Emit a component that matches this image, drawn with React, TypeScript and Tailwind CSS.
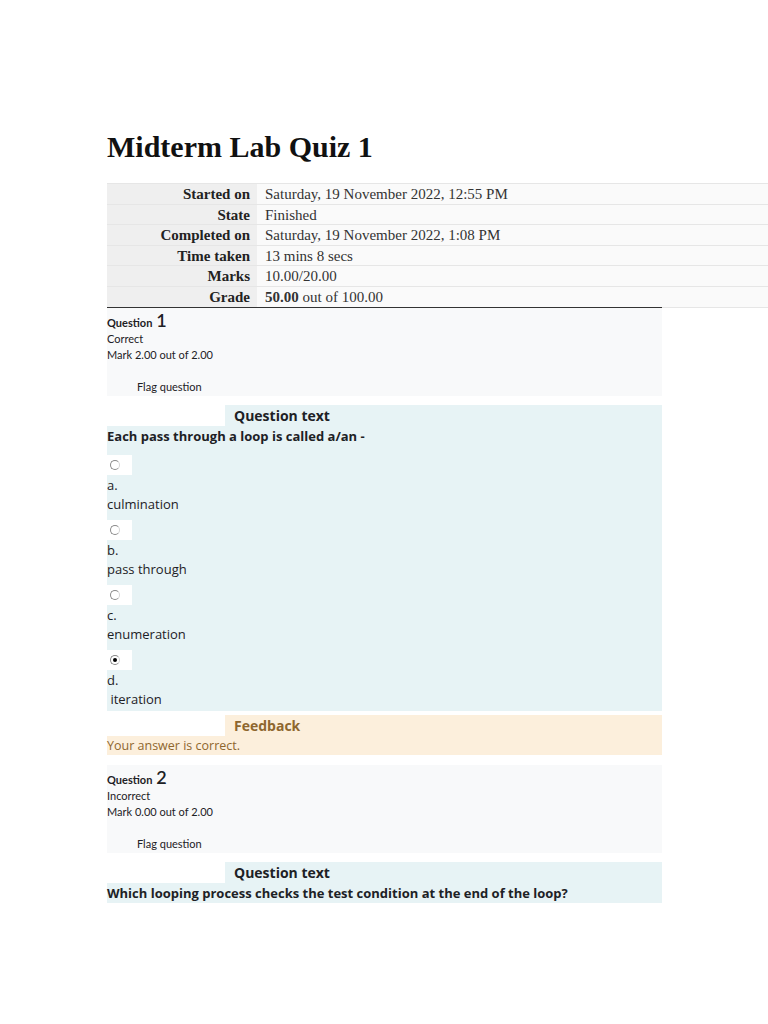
const serif = { fontFamily: '"Liberation Serif", "Times New Roman", serif' };
const lato = { fontFamily: 'Lato, "Noto Sans", sans-serif' };
const open = { fontFamily: '"Open Sans", "Noto Sans", sans-serif' };

const summary: [string, React.ReactNode][] = [
  ['Started on', 'Saturday, 19 November 2022, 12:55 PM'],
  ['State', 'Finished'],
  ['Completed on', 'Saturday, 19 November 2022, 1:08 PM'],
  ['Time taken', '13 mins 8 secs'],
  ['Marks', '10.00/20.00'],
  [
    'Grade',
    <>
      <b>50.00</b> out of 100.00
    </>,
  ],
];

function Radio({ checked = false }: { checked?: boolean }) {
  return (
    <div className="w-[25px] h-[20px] bg-white flex items-center pl-[3px]">
      <span className="w-[10px] h-[10px] rounded-full border border-[#8a8a8a] border-r-[#d5d5d5] flex items-center justify-center">
        {checked && <span className="w-[4px] h-[4px] rounded-full bg-black" />}
      </span>
    </div>
  );
}

function InfoBox({ num, state, mark }: { num: number; state: string; mark: string }) {
  return (
    <div className="w-[555px] bg-[#f8f9fa] pt-[4px] h-[88px] text-[11px] leading-[16px] text-[#1d2125]" style={lato}>
      <div className="flex items-baseline gap-[4px]">
        <span className="font-bold">Question</span>
        <span className="text-[18px] leading-[16px] font-semibold">{num}</span>
      </div>
      <div>{state}</div>
      <div>{mark}</div>
      <div className="pl-[30px] mt-[16px]">Flag question</div>
    </div>
  );
}

function Heading({ children, tone }: { children: React.ReactNode; tone: 'q' | 'f' }) {
  return (
    <div className="flex h-[21px] bg-white">
      <div
        className={`ml-[118px] flex-1 pl-[9px] text-[14px] leading-[21px] font-bold ${
          tone === 'q' ? 'bg-[#e7f3f5] text-[#1d2125]' : 'bg-[#fcefdc] text-[#8e662e]'
        }`}
      >
        {children}
      </div>
    </div>
  );
}

const options = [
  { l: 'a.', t: 'culmination' },
  { l: 'b.', t: 'pass through' },
  { l: 'c.', t: 'enumeration' },
  { l: 'd.', t: ' iteration', checked: true },
];

export default function App() {
  return (
    <div className="min-h-[1024px] bg-white overflow-hidden pl-[107px] pt-[129px]" style={open}>
      <h1 className="text-[30px] leading-[36px] font-bold text-[#111]" style={serif}>
        Midterm Lab Quiz 1
      </h1>

      <div className="mt-[18px] w-[680px] border-t border-[#e6e6e6]" style={serif}>
        {summary.map(([k, v]) => (
          <div key={k} className="flex h-[20.6px] border-b border-[#e6e6e6] text-[15px] leading-[20px]">
            <div className="w-[150px] bg-[#efefef] text-right pr-[7px] font-bold text-[#222]">{k}</div>
            <div className="flex-1 bg-[#fafafa] pl-[8px] text-[#333]">{v}</div>
          </div>
        ))}
      </div>

      <div className="border-t-2 border-[#333] w-[555px] -mt-[2px]" />
      <InfoBox num={1} state="Correct" mark="Mark 2.00 out of 2.00" />

      <div className="w-[555px] mt-[9px] bg-[#e7f3f5] text-[13px] text-[#1d2125] pb-[2px]">
        <Heading tone="q">Question text</Heading>
        <div className="font-bold leading-[21px]">Each pass through a loop is called a/an -</div>
        <div className="pt-[8px]">
          {options.map((o) => (
            <div key={o.l} className="pb-[6px] last:pb-0">
              <Radio checked={o.checked} />
              <div className="leading-[19px] mt-[1px]">{o.l}</div>
              <div className="leading-[19px] whitespace-pre">{o.t}</div>
            </div>
          ))}
        </div>
      </div>

      <div className="w-[555px] mt-[4px] bg-[#fcefdc] text-[12.5px] text-[#8e662e] h-[40px]">
        <Heading tone="f">Feedback</Heading>
        <div className="leading-[19px]">Your answer is correct.</div>
      </div>

      <div className="mt-[10px]">
        <InfoBox num={2} state="Incorrect" mark="Mark 0.00 out of 2.00" />
      </div>

      <div className="w-[555px] mt-[9px] bg-[#e7f3f5] text-[13px] text-[#1d2125] h-[41px]">
        <Heading tone="q">Question text</Heading>
        <div className="font-bold leading-[20px]">
          Which looping process checks the test condition at the end of the loop?
        </div>
      </div>
    </div>
  );
}
